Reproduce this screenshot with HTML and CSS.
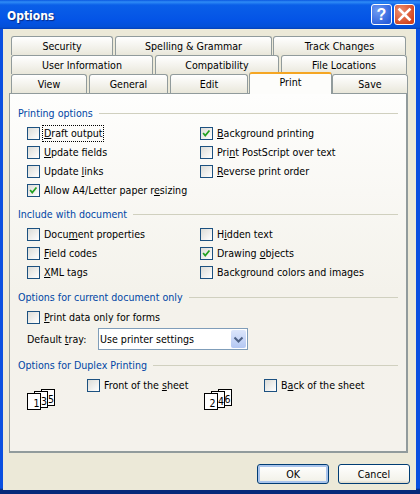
FILE: index.html
```html
<!DOCTYPE html>
<html lang="en">
<head>
<meta charset="utf-8">
<title>Options</title>
<link rel="stylesheet" href="styles.css">
</head>
<body>
<div class="window">
  <header class="titlebar">
    <span class="title">Options</span>
    <span class="caption-btns">
      <span class="cap help">?</span>
      <span class="cap close"><svg viewBox="0 0 21 21" width="21" height="21"><path d="M5.5 5.5 15.5 15.5M15.5 5.5 5.5 15.5" stroke="#fff" stroke-width="2.6" stroke-linecap="square" fill="none"/></svg></span>
    </span>
  </header>
  <div class="client">
    <nav class="tabs">
      <div class="tabrow">
        <span class="tab w-security">Security</span>
        <span class="tab w-spelling">Spelling &amp; Grammar</span>
        <span class="tab w-track">Track Changes</span>
      </div>
      <div class="tabrow">
        <span class="tab w-user">User Information</span>
        <span class="tab w-compat">Compatibility</span>
        <span class="tab w-files">File Locations</span>
      </div>
      <div class="tabrow">
        <span class="tab w-view">View</span>
        <span class="tab w-general">General</span>
        <span class="tab w-edit">Edit</span>
        <span class="tab tab-active w-print">Print</span>
        <span class="tab w-save">Save</span>
      </div>
    </nav>
    <main class="panel">
      <h2 class="group first"><span>Printing options</span></h2>
      <div class="checks">
        <div class="col">
          <label class="check"><i class="box"></i><span class="focus"><u>D</u>raft output</span></label>
          <label class="check"><i class="box"></i><span><u>U</u>pdate fields</span></label>
          <label class="check"><i class="box"></i><span>Update <u>l</u>inks</span></label>
          <label class="check"><i class="box on"><svg viewBox="0 0 13 13" width="11" height="11"><path d="M2.5 6 5 9 10 3" stroke="#21a121" stroke-width="2" fill="none"/></svg></i><span>Allow A4/Letter paper r<u>e</u>sizing</span></label>
        </div>
        <div class="col">
          <label class="check"><i class="box on"><svg viewBox="0 0 13 13" width="11" height="11"><path d="M2.5 6 5 9 10 3" stroke="#21a121" stroke-width="2" fill="none"/></svg></i><span><u>B</u>ackground printing</span></label>
          <label class="check"><i class="box"></i><span>Pri<u>n</u>t PostScript over text</span></label>
          <label class="check"><i class="box"></i><span><u>R</u>everse print order</span></label>
        </div>
      </div>
      <h2 class="group g-include"><span>Include with document</span></h2>
      <div class="checks">
        <div class="col">
          <label class="check"><i class="box"></i><span>Docu<u>m</u>ent properties</span></label>
          <label class="check"><i class="box"></i><span><u>F</u>ield codes</span></label>
          <label class="check"><i class="box"></i><span><u>X</u>ML tags</span></label>
        </div>
        <div class="col">
          <label class="check"><i class="box"></i><span>H<u>i</u>dden text</span></label>
          <label class="check"><i class="box on"><svg viewBox="0 0 13 13" width="11" height="11"><path d="M2.5 6 5 9 10 3" stroke="#21a121" stroke-width="2" fill="none"/></svg></i><span>Drawing <u>o</u>bjects</span></label>
          <label class="check"><i class="box"></i><span>Back<u>g</u>round colors and images</span></label>
        </div>
      </div>
      <h2 class="group g-current"><span>Options for current document only</span></h2>
      <div class="checks single">
        <label class="check"><i class="box"></i><span><u>P</u>rint data only for forms</span></label>
      </div>
      <div class="tray">
        <span class="tray-label">Default <u>t</u>ray:</span>
        <span class="select">
          <span class="select-text">Use printer settings</span>
          <span class="select-btn"><svg viewBox="0 0 15 15" width="15" height="15"><path d="M3.5 5.5 7.5 9.5 11.5 5.5" stroke="#4d6185" stroke-width="2" fill="none"/></svg></span>
        </span>
      </div>
      <h2 class="group g-duplex"><span>Options for Duplex Printing</span></h2>
      <div class="duplex">
        <div class="side side-front">
          <svg class="sheets" viewBox="0 0 28 21" width="28" height="21">
            <rect x="14.5" y="0.5" width="13" height="16" fill="#fff" stroke="#000"/><text x="21" y="14" class="sheet-num">5</text>
            <rect x="7.5" y="2.5" width="13" height="16" fill="#fff" stroke="#000"/><text x="14" y="15.5" class="sheet-num">3</text>
            <rect x="0.5" y="4.5" width="13" height="16" fill="#fff" stroke="#000"/><text x="6.5" y="18" class="sheet-num">1</text>
          </svg>
          <label class="check"><i class="box"></i><span>Front of the <u>s</u>heet</span></label>
        </div>
        <div class="side side-back">
          <svg class="sheets" viewBox="0 0 28 21" width="28" height="21">
            <rect x="14.5" y="0.5" width="13" height="16" fill="#fff" stroke="#000"/><text x="20.5" y="14" class="sheet-num">6</text>
            <rect x="7.5" y="2.5" width="13" height="16" fill="#fff" stroke="#000"/><text x="14" y="15.5" class="sheet-num">4</text>
            <rect x="0.5" y="4.5" width="13" height="16" fill="#fff" stroke="#000"/><text x="5.5" y="18" class="sheet-num">2</text>
          </svg>
          <label class="check"><i class="box"></i><span>B<u>a</u>ck of the sheet</span></label>
        </div>
      </div>
    </main>
    <footer class="buttons">
      <span class="btn btn-default">OK</span>
      <span class="btn">Cancel</span>
    </footer>
  </div>
</div>
</body>
</html>
```
FILE: styles.css
```css
* { box-sizing: border-box; }
html, body { margin: 0; padding: 0; }
body {
  width: 420px;
  height: 494px;
  overflow: hidden;
  font: 10.6px/13px "DejaVu Sans Condensed", "DejaVu Sans", sans-serif;
  color: #000;
  background: #0831d9;
}
.window {
  width: 420px;
  height: 494px;
  display: flex;
  flex-direction: column;
  background: linear-gradient(#0a4fe0, #0a4fe0 488px, #06297a 490px);
}
.titlebar {
  height: 29px;
  flex: none;
  display: flex;
  align-items: center;
  justify-content: space-between;
  padding: 0 5px 0 7px;
  background: linear-gradient(#0a57e0 0, #2f8cf6 2px, #0a5fe8 5px, #0454e6 20px, #0350d8 27px, #0440b8 29px);
}
.title {
  font: bold 12px "DejaVu Sans Condensed", "DejaVu Sans", sans-serif;
  color: #fff;
  text-shadow: 1px 1px 1px #0a2a80;
  padding-top: 2px;
}
.caption-btns { display: flex; gap: 2px; }
.cap {
  width: 21px;
  height: 21px;
  border: 1px solid #fff;
  border-radius: 3px;
  display: flex;
  align-items: center;
  justify-content: center;
  color: #fff;
  font: bold 16px "Liberation Sans", sans-serif;
}
.cap svg { margin: -1px; flex: none; }
.help { background: radial-gradient(circle at 30% 30%, #6f9cf2, #2b5fdc 80%); }
.close { background: radial-gradient(circle at 30% 30%, #ec8f70, #d2421c 80%); }
.client {
  flex: 1;
  min-height: 0;
  margin: 0 4px 4px 3px;
  padding: 7px 6px 0 6px;
  background: #ece9d8;
  display: flex;
  flex-direction: column;
}
.tabs { display: flex; flex-direction: column; flex: none; position: relative; z-index: 1; }
.tabrow { display: flex; gap: 2px; height: 19px; padding-left: 2px; }
.tab {
  height: 19px;
  display: flex;
  align-items: center;
  justify-content: center;
  background: linear-gradient(#fff, #f2f1ea 60%, #e9e7da);
  border: 1px solid #919b9c;
  border-bottom: 0;
  border-radius: 3px 3px 0 0;
  padding-top: 1px;
}
.w-security { width: 102px; }
.w-spelling { width: 157px; }
.w-track { width: 133px; margin-left: -1px; }
.w-user { width: 142px; }
.w-compat { width: 124px; }
.w-files { width: 126px; }
.w-view { width: 76px; }
.w-general { width: 79px; }
.w-edit { width: 78px; margin-right: -1px; }
.w-print { width: 83px; margin-right: -2px; }
.w-save { width: 76px; }
.tab-active {
  height: 22px;
  margin-top: -2px;
  background: #fdfdfb;
  border-top: 2px solid #f5a623;
  border-color: #f5a623 #919b9c #fdfdfb;
  border-bottom: 0;
  position: relative;
  z-index: 2;
  padding: 0 0 4px;
}
.panel {
  height: 360px;
  flex: none;
  width: 399px;
  padding: 12px 8px 0 8px;
  border: 1px solid #919b9c;
  border-right-width: 2px;
  border-bottom-width: 2px;
  background: linear-gradient(#fefefd, #f4f2eb 55%, #f4f2ec);
  color: #000;
}
.group {
  margin: 0;
  height: 14px;
  font: inherit;
  color: #0046a5;
  display: flex;
  align-items: center;
  gap: 6px;
}
.group::after { content: ""; flex: 1; height: 1px; background: #d0d0bf; }
.g-include { margin-top: 7px; }
.g-current { margin-top: 8px; }
.g-duplex { margin-top: 8px; }
.checks { display: flex; margin-top: 4px; }
.col { display: flex; flex-direction: column; }
.col:first-child { width: 173px; margin-left: 9px; }
.single { margin-left: 9px; }
.check { display: flex; align-items: center; height: 19px; gap: 4px; white-space: nowrap; }
.box {
  width: 13px;
  height: 13px;
  flex: none;
  display: flex;
  align-items: center;
  justify-content: center;
  border: 1px solid #1c5180;
  background: linear-gradient(135deg, #dcdcd7, #fff);
}
.focus { outline: 1px dotted #000; padding: 1px; margin-left: -1px; }
.tray { display: flex; align-items: center; margin: 1px 0 0 9px; }
.tray-label { width: 71px; }
.select {
  width: 150px;
  height: 22px;
  display: flex;
  align-items: center;
  justify-content: space-between;
  border: 1px solid #7f9db9;
  background: #fff;
  padding: 1px 1px 1px 1px;
}
.select-btn {
  width: 15px;
  height: 18px;
  display: flex;
  align-items: center;
  justify-content: center;
  border-radius: 2px;
  background: linear-gradient(#dce6fb, #b3c7f3);
}
.duplex { display: flex; padding-left: 9px; margin-top: 4px; }
.side { display: flex; align-items: flex-start; width: 177px; }
.sheets { flex: none; margin: 13px 32px 0 0; }
.sheet-num { font: 10.5px "DejaVu Sans Condensed", "DejaVu Sans", sans-serif; fill: #000; }
.buttons { flex: 1; display: flex; justify-content: flex-end; align-items: flex-start; gap: 9px; padding-top: 11px; }
.btn {
  width: 72px;
  height: 20px;
  display: flex;
  align-items: center;
  justify-content: center;
  border: 1px solid #003c74;
  border-radius: 3px;
  background: linear-gradient(#fff, #f3f2ea 85%, #dcd8c8);
}
.btn-default { box-shadow: inset 0 0 0 2px #a9c4ec; }
```
